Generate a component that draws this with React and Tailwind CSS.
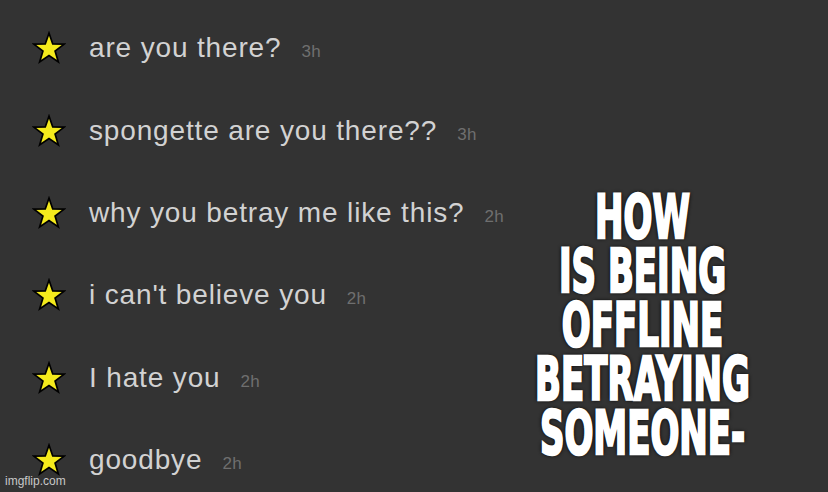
import React from "react";

const messages = [
  { text: "are you there?", time: "3h" },
  { text: "spongette are you there??", time: "3h" },
  { text: "why you betray me like this?", time: "2h" },
  { text: "i can't believe you", time: "2h" },
  { text: "I hate you", time: "2h" },
  { text: "goodbye", time: "2h" },
];

function Star() {
  return (
    <svg width="34" height="34" viewBox="0 0 32 32" className="shrink-0 self-center">
      <polygon
        points="16,2 19.53,12.15 30.27,12.36 21.71,18.85 24.82,29.14 16,23 7.18,29.14 10.29,18.85 1.73,12.36 12.47,12.15"
        fill="#f4ea1c"
        stroke="#000"
        strokeWidth="1.6"
        strokeLinejoin="miter"
      />
    </svg>
  );
}

export default function App() {
  return (
    <div className="relative w-[828px] h-[492px] overflow-hidden bg-[#333333] flex font-['Liberation_Sans',Arial,sans-serif]">
      <div className="flex-1 flex flex-col pt-[7px] pl-[32px]">
        {messages.map((m) => (
          <div key={m.text} className="h-[82.4px] shrink-0 flex items-center">
            <Star />
            <div className="ml-[23px] flex items-baseline">
              <span className="text-[28px] tracking-[0.85px] text-[#d2d2d2] leading-none">{m.text}</span>
              <span className="ml-[20px] text-[17px] tracking-[0.3px] text-[#6f6f6f] leading-none">{m.time}</span>
            </div>
          </div>
        ))}
      </div>

      <div className="w-[260px] mr-[55px] pt-[190px] flex flex-col items-center">
        <div className="scale-x-[0.63] text-center text-white font-bold uppercase text-[60px] leading-[54px] font-['Liberation_Sans_Narrow','DejaVu_Sans_Condensed',sans-serif] [text-shadow:0_0_4px_#000,0_0_6px_#000] [-webkit-text-stroke:2.5px_#fff] whitespace-nowrap">
          <div>HOW</div>
          <div>IS BEING</div>
          <div>OFFLINE</div>
          <div>BETRAYING</div>
          <div>SOMEONE-</div>
        </div>
      </div>

      <span className="absolute left-[5px] bottom-[2px] text-[12px] text-[#c8c8c8] font-['Liberation_Sans',Arial,sans-serif]">
        imgflip.com
      </span>
    </div>
  );
}
